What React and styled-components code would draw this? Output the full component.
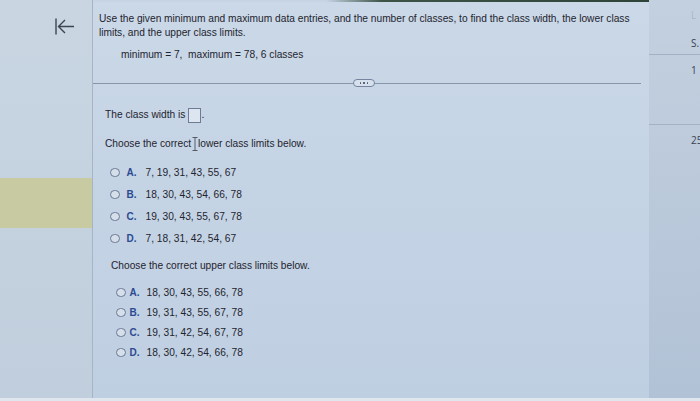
import styled, { createGlobalStyle } from 'styled-components'

const Global = createGlobalStyle`
  html, body { margin: 0; padding: 0; background: #b9c8da; }
  body { font-family: "Liberation Sans", Arial, sans-serif; }
`

const lower = [
  ['A.', '7, 19, 31, 43, 55, 67'],
  ['B.', '18, 30, 43, 54, 66, 78'],
  ['C.', '19, 30, 43, 55, 67, 78'],
  ['D.', '7, 18, 31, 42, 54, 67'],
]

const upper = [
  ['A.', '18, 30, 43, 55, 66, 78'],
  ['B.', '19, 31, 43, 55, 67, 78'],
  ['C.', '19, 31, 42, 54, 67, 78'],
  ['D.', '18, 30, 42, 54, 66, 78'],
]

const Option = ({ letter, text }) => (
  <Row>
    <Radio />
    <Letter>{letter}</Letter>
    <span>{text}</span>
  </Row>
)

const App = () => {
  return (
    <>
      <Global />
      <Screen>
        <Sidebar>
          <Back>
            <svg width="22" height="19" viewBox="0 0 22 19">
              <path d="M2 1.5v16M20 9.5H5M11 3L4.5 9.5 11 16" stroke="#3d4452" strokeWidth="1.4" fill="none" />
            </svg>
          </Back>
          <Highlight />
        </Sidebar>

        <Main>
          <Question>
            Use the given minimum and maximum data entries, and the number of classes, to find the class width, the lower class
            limits, and the upper class limits.
          </Question>
          <Given>minimum = 7,&nbsp; maximum = 78, 6 classes</Given>

          <Divider>
            <Pill>
              <span />
              <span />
              <span />
            </Pill>
          </Divider>

          <Body>
            <Line>
              The class width is <AnswerBox />.
            </Line>
            <Line $top={13}>
              Choose the correct
              <Caret viewBox="0 0 6 14" width="6" height="14">
                <path d="M0.5 0.5h5M3 0.5v13M0.5 13.5h5" stroke="#4a4f5a" strokeWidth="0.9" fill="none" />
              </Caret>
              lower class limits below.
            </Line>
            <Options $indent={5} $top={14} $gap={9} $radioGap={7} $letterWidth={19}>
              {lower.map(([l, t]) => (
                <Option key={l} letter={l} text={t} />
              ))}
            </Options>

            <Line $top={13} $shift={6}>Choose the correct upper class limits below.</Line>
            <Options $indent={11} $top={12} $gap={7} $radioGap={4} $letterWidth={17}>
              {upper.map(([l, t]) => (
                <Option key={l} letter={l} text={t} />
              ))}
            </Options>
          </Body>
        </Main>

        <RightPanel>
          <Cell $h={28}><Faint>L</Faint></Cell>
          <Cell $h={27} $line>S.</Cell>
          <Cell $h={70} $line>1</Cell>
          <Cell $h={40}>25</Cell>
        </RightPanel>
      </Screen>
    </>
  )
}

const Screen = styled.div`
  width: 700px;
  height: 401px;
  display: flex;
  overflow: hidden;
  background: linear-gradient(180deg, #c4d2e2 0%, #bccbdd 100%);
  color: #1f242e;
  font-size: 10.2px;
  border-bottom: 3px solid #dfe6ee;
  box-sizing: border-box;
`

const Sidebar = styled.aside`
  width: 92px;
  flex-shrink: 0;
  background: linear-gradient(180deg, #c9d6e2 0%, #c0cedd 100%);
  border-right: 1px solid #a8b6c8;
  display: flex;
  flex-direction: column;
`

const Back = styled.div`
  padding: 17px 0 0 54px;
  height: 40px;
  box-sizing: border-box;
`

const Highlight = styled.div`
  margin-top: 138px;
  height: 50px;
  background: #c8caa1;
`

const Main = styled.main`
  width: 556px;
  flex-shrink: 0;
  background: linear-gradient(180deg, #cad8e7 0%, #bfcfe2 100%);
  box-shadow: 1px 0 2px #8e9db3;
  border-top: 2px solid transparent;
  border-image: linear-gradient(90deg, #c6d4e3 0%, #c6d4e3 42%, #3d5346 52%, #2f4439 100%) 1;
  box-sizing: border-box;
  display: flex;
  flex-direction: column;
`

const Question = styled.p`
  margin: 0;
  padding: 10px 14px 0 6px;
  line-height: 14px;
`

const Given = styled.p`
  margin: 0;
  padding: 8px 0 0 28px;
  line-height: 14px;
`

const Divider = styled.div`
  margin-top: 21px;
  height: 1px;
  background: #8894aa;
  margin-right: 8px;
  position: relative;
`

const Pill = styled.div`
  position: absolute;
  left: 260px;
  top: -4px;
  width: 22px;
  height: 8px;
  box-sizing: border-box;
  border: 1px solid #7784a0;
  border-radius: 4px;
  background: #d7e1ed;
  display: flex;
  justify-content: center;
  align-items: center;
  gap: 2px;
  span {
    width: 1.5px;
    height: 1.5px;
    background: #46506a;
    border-radius: 50%;
  }
`

const Body = styled.div`
  padding: 23px 0 0 12px;
  display: flex;
  flex-direction: column;
`

const Line = styled.div`
  margin-top: ${p => p.$top || 0}px;
  padding-left: ${p => p.$shift || 0}px;
  line-height: 16px;
  display: flex;
  align-items: center;
`

const AnswerBox = styled.span`
  display: inline-block;
  width: 11px;
  height: 13px;
  margin-left: 3px;
  border: 1px solid #6e7b95;
  background: #dde6f0;
`

const Caret = styled.svg`
  margin: 0 0 0 1px;
`

const Row = styled.div`
  display: flex;
  align-items: center;
  line-height: 13px;
`

const Radio = styled.span`
  width: 7.5px;
  height: 7.5px;
  border-radius: 50%;
  border: 1.4px solid #6b7896;
  background: #d5dfea;
`

const Letter = styled.span`
  color: #2c4a92;
  font-weight: bold;
  font-size: 10px;
`

const Options = styled.div`
  padding: ${p => p.$top}px 0 0 ${p => p.$indent}px;
  display: flex;
  flex-direction: column;
  gap: ${p => p.$gap}px;
  ${Radio} {
    margin-right: ${p => p.$radioGap}px;
  }
  ${Letter} {
    width: ${p => p.$letterWidth}px;
  }
`

const RightPanel = styled.section`
  flex: 1;
  display: flex;
  flex-direction: column;
  background: linear-gradient(180deg, #c3d0df 0%, #b2c2d6 100%);
  font-family: "Open Sans", "Liberation Sans", sans-serif;
  font-size: 10px;
  color: #3b4352;
`

const Cell = styled.div`
  height: ${p => p.$h}px;
  padding: 8px 0 0 42px;
  box-sizing: border-box;
  border-bottom: ${p => (p.$line ? '1px solid #a3b1c4' : 'none')};
`

const Faint = styled.span`
  color: #aab6c6;
`

export default App
